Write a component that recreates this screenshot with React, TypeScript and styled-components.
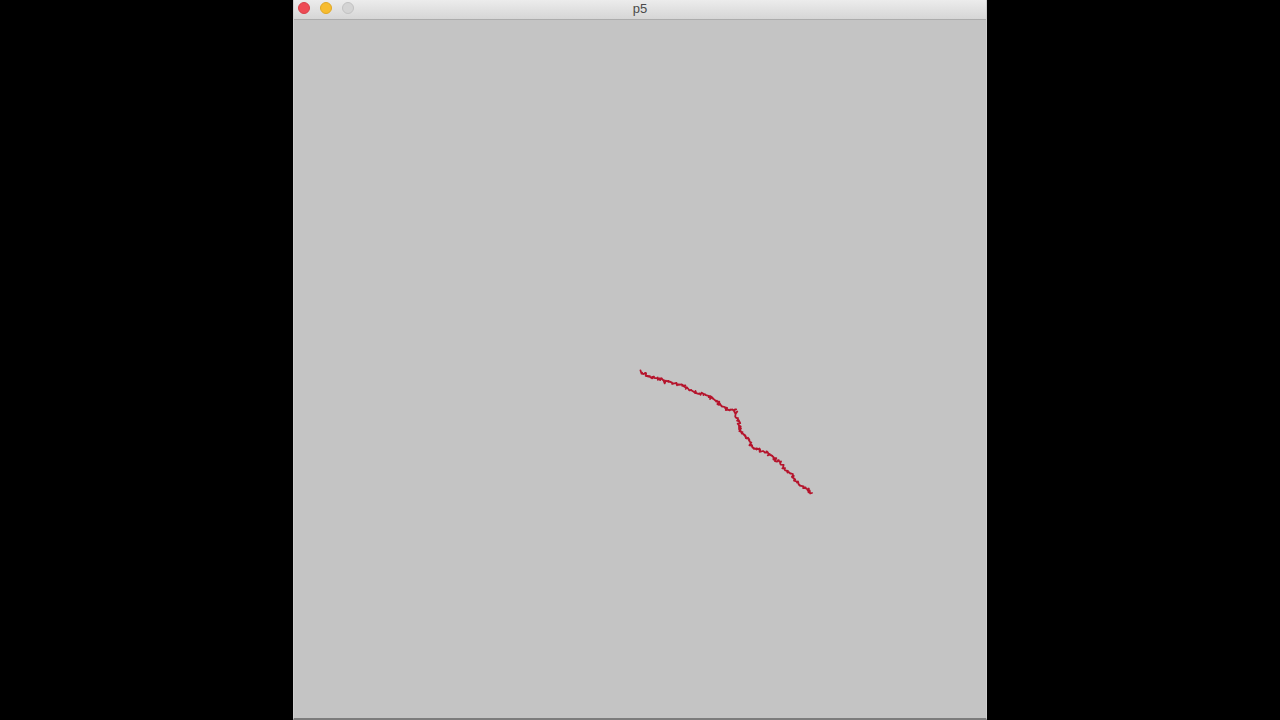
import React from "react";
import styled, { createGlobalStyle } from "styled-components";

const Global = createGlobalStyle`
  html, body { margin: 0; padding: 0; background: #000; overflow: hidden; }
  #root { width: 1280px; height: 720px; }
`;

const Screen = styled.div`
  width: 1280px;
  height: 720px;
  background: #000;
  display: flex;
  justify-content: center;
`;

const Window = styled.div`
  width: 694px;
  height: 720px;
  display: flex;
  flex-direction: column;
  background: #c4c4c4;
  box-sizing: border-box;
  border-left: 1px solid #d0d0d0;
  border-right: 1px solid #cfcfcf;
  border-bottom: 2px solid #7c7c7c;
`;

const TitleBar = styled.div`
  position: relative;
  height: 19px;
  flex: 0 0 19px;
  background: linear-gradient(#ececec, #d6d6d6);
  border-bottom: 1px solid #acacac;
  display: flex;
  align-items: flex-start;
  justify-content: center;
`;

const Lights = styled.div`
  position: absolute;
  left: 4px;
  top: 2px;
  display: flex;
  gap: 10px;
`;

const Light = styled.span<{ $fill: string; $ring: string }>`
  width: 12px;
  height: 12px;
  border-radius: 50%;
  box-sizing: border-box;
  background: ${(p) => p.$fill};
  border: 1px solid ${(p) => p.$ring};
`;

const Title = styled.span`
  font-family: "Liberation Sans", Arial, sans-serif;
  font-size: 13px;
  color: #4a4a4a;
  line-height: 17px;
`;

const Canvas = styled.div`
  flex: 1;
  position: relative;
`;

const Drawing = styled.svg`
  position: absolute;
  left: 0;
  top: 0;
`;

const keys: [number, number][] = [
  [640, 371], [645, 374], [650, 377], [660, 379], [665, 382], [673, 383],
  [683, 385], [688, 388], [697, 393], [707, 395], [713, 399], [722, 405],
  [727, 410], [735, 410], [737, 418], [740, 425], [740, 432], [745, 435],
  [750, 442], [753, 448], [763, 451], [767, 453], [773, 458], [780, 462],
  [783, 467], [790, 473], [795, 480], [800, 485], [805, 488], [812, 493],
];

function buildPath(): string {
  let seed = 12345;
  const rnd = () => {
    seed = (seed * 1103515245 + 12345) % 2147483648;
    return seed / 2147483648;
  };
  const pts: string[] = [];
  const ox = 294;
  const oy = 20;
  for (let i = 0; i < keys.length - 1; i++) {
    const [x0, y0] = keys[i];
    const [x1, y1] = keys[i + 1];
    const d = Math.hypot(x1 - x0, y1 - y0);
    const n = Math.max(2, Math.round(d / 1.0));
    for (let k = 0; k < n; k++) {
      const t = k / n;
      const x = x0 + (x1 - x0) * t + (rnd() - 0.5) * 3.2;
      const y = y0 + (y1 - y0) * t + (rnd() - 0.5) * 3.2;
      pts.push(`${(x - ox).toFixed(1)},${(y - oy).toFixed(1)}`);
    }
  }
  const last = keys[keys.length - 1];
  pts.push(`${last[0] - ox},${last[1] - oy}`);
  return "M" + pts.join(" L");
}

const pathD = buildPath();

export default function App() {
  return (
    <>
      <Global />
      <Screen>
        <Window>
          <TitleBar>
            <Lights>
              <Light $fill="#ee4b55" $ring="#d8414a" />
              <Light $fill="#f7bc2f" $ring="#e0a825" />
              <Light $fill="#d4d4d4" $ring="#c2c2c2" />
            </Lights>
            <Title>p5</Title>
          </TitleBar>
          <Canvas>
            <Drawing width="692" height="698" viewBox="0 0 692 698">
              <path
                d={pathD}
                fill="none"
                stroke="#b5142c"
                strokeWidth="1.8"
                strokeLinejoin="round"
                strokeLinecap="round"
              />
            </Drawing>
          </Canvas>
        </Window>
      </Screen>
    </>
  );
}
